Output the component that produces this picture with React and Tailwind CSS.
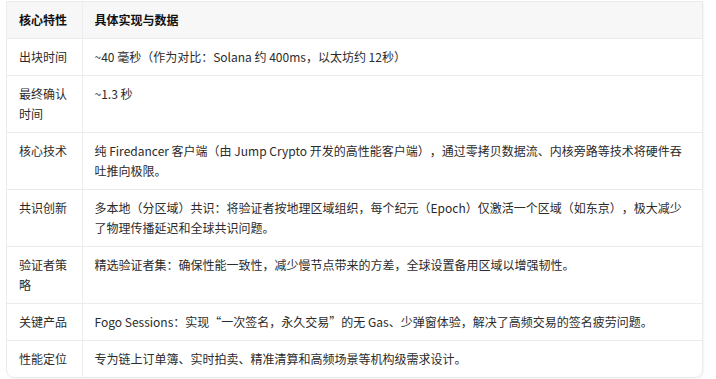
import React from "react";

const rows = [
  ["出块时间", "~40 毫秒（作为对比：Solana 约 400ms，以太坊约 12秒）"],
  ["最终确认时间", "~1.3 秒"],
  [
    "核心技术",
    "纯 Firedancer 客户端（由 Jump Crypto 开发的高性能客户端），通过零拷贝数据流、内核旁路等技术将硬件吞吐推向极限。",
  ],
  [
    "共识创新",
    "多本地（分区域）共识：将验证者按地理区域组织，每个纪元（Epoch）仅激活一个区域（如东京），极大减少了物理传播延迟和全球共识问题。",
  ],
  ["验证者策略", "精选验证者集：确保性能一致性，减少慢节点带来的方差，全球设置备用区域以增强韧性。"],
  ["关键产品", "Fogo Sessions：实现“一次签名，永久交易”的无 Gas、少弹窗体验，解决了高频交易的签名疲劳问题。"],
  ["性能定位", "专为链上订单簿、实时拍卖、精准清算和高频场景等机构级需求设计。"],
];

function App() {
  return (
    <div
      className="w-[716px] h-[379px] bg-white overflow-hidden pl-[6px] pr-[13px] pt-[1px]"
      style={{ fontFamily: '"Noto Sans CJK SC", "Noto Sans", sans-serif' }}
    >
      <div className="border border-[#ebebeb] rounded-b-lg shadow-[1px_1px_2px_rgba(0,0,0,0.05)] overflow-hidden">
        <table className="w-full table-fixed border-collapse text-[12px] leading-5 text-[#2b2b2b] [text-spacing-trim:space-all]">
          <colgroup>
            <col className="w-[75px]" />
            <col />
          </colgroup>
          <thead>
            <tr className="bg-[#f7f7f7]">
              <th className="text-left font-bold text-[#111] px-3 py-2 border-r border-[#ededed]">
                核心特性
              </th>
              <th className="text-left font-bold text-[#111] px-3 py-2">具体实现与数据</th>
            </tr>
          </thead>
          <tbody>
            {rows.map(([k, v], i) => (
              <tr key={i} className="border-t border-[#ebebeb]">
                <td className="align-top px-3 py-2 border-r border-[#ededed]">{k}</td>
                <td className="align-top px-3 py-2">{v}</td>
              </tr>
            ))}
          </tbody>
        </table>
      </div>
    </div>
  );
}

export default App;
